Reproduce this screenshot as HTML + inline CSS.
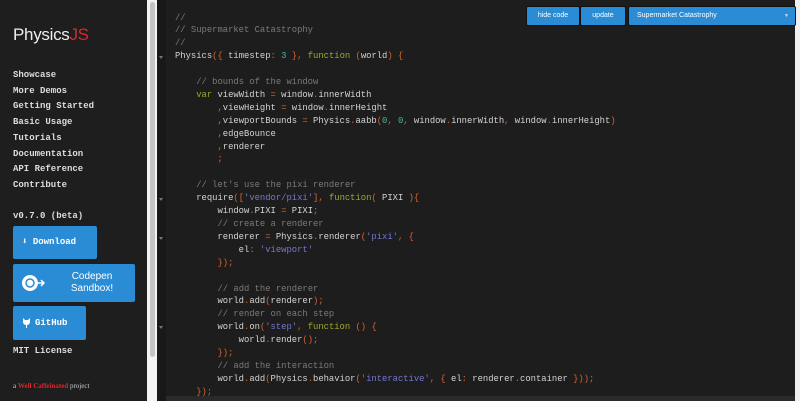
<!DOCTYPE html>
<html><head><meta charset="utf-8"><style>
*{margin:0;padding:0;box-sizing:border-box}
body{width:800px;height:401px;overflow:hidden;background:#1c1c1c;font-family:"Liberation Sans",sans-serif;position:relative}
#side{position:absolute;left:0;top:0;width:147px;height:401px;background:#1e1e1e}
.logo{position:absolute;left:13px;top:25px;font-size:17px;color:#eee;letter-spacing:-0.3px}
.logo span{color:#d9262c}
.nav{position:absolute;left:13px;top:68px;font-family:"Liberation Mono",monospace;font-weight:bold;font-size:9px;color:#ddd;line-height:15.7px}
.ver{position:absolute;left:13px;top:211px;font-family:"Liberation Mono",monospace;font-weight:bold;font-size:9px;color:#ddd}
.btn{position:absolute;background:#2b8cd6;border-radius:2px;color:#fff;font-size:10px}
.mit{position:absolute;left:13px;top:346px;font-family:"Liberation Mono",monospace;font-weight:bold;font-size:9px;color:#ddd}
.cred{position:absolute;left:13px;top:382px;font-family:"Liberation Serif",serif;font-size:7px;color:#ccc}
.cred b{color:#d9262c}
#sb{position:absolute;left:147px;top:0;width:10px;height:401px;background:#f3f3f3}
#sb div{position:absolute;left:3px;top:2px;width:5px;height:355px;background:#c4c4c4;border-radius:3px}
#gut{position:absolute;left:157px;top:0;width:9px;height:401px;background:#181818}
#code{position:absolute;left:166px;top:0;width:629px;height:401px;background:#1d1d1d}
pre{position:absolute;left:175px;top:11.5px;font-family:"Liberation Mono",monospace;font-size:8.85px;line-height:12.9px;color:#d4d4d4}
.c{color:#7a7a7a}.k{color:#a0a82e}.p{color:#d6662e}.s{color:#7377d0}.n{color:#45b5a5}
#rs{position:absolute;left:795px;top:0;width:5px;height:401px;background:#f0f0f0}
#hs{position:absolute;left:166px;top:396px;width:629px;height:5px;background:#2a2a2a}
.tb{position:absolute;top:6px;height:20px;background:#2b8cd6;border:1px solid #111;border-radius:2px;color:#fff;font-size:7px;line-height:18px;text-align:center}
.arr{position:absolute;left:159px;width:0;height:0;border-left:2.5px solid transparent;border-right:2.5px solid transparent;border-top:3px solid #777}
</style></head><body>
<div id="side">
<div class="logo">Physics<span>JS</span></div>
<div class="nav">Showcase<br>More Demos<br>Getting Started<br>Basic Usage<br>Tutorials<br>Documentation<br>API Reference<br>Contribute</div>
<div class="ver">v0.7.0 (beta)</div>
<div class="btn" style="left:13px;top:226px;width:84px;height:33px;font-family:'Liberation Mono',monospace;font-weight:bold;font-size:9px;line-height:33px;padding-left:9px">⬇ Download</div>
<div class="btn" style="left:13px;top:264px;width:122px;height:38px">
<svg style="position:absolute;left:8px;top:10px" width="24" height="18" viewBox="0 0 24 18"><circle cx="9" cy="9" r="8" fill="#fff"/><circle cx="9" cy="9" r="4" fill="none" stroke="#2b8cd6" stroke-width="1.5"/><path d="M17 9h5M20 6l3 3-3 3" stroke="#fff" stroke-width="1.5" fill="none"/></svg>
<div style="position:absolute;left:54px;top:7px;text-align:center;font-size:10px;line-height:12px;width:50px">Codepen<br>Sandbox!</div></div>
<div class="btn" style="left:13px;top:306px;width:73px;height:34px;font-family:'Liberation Mono',monospace;font-weight:bold;font-size:9px;line-height:34px;padding-left:22px">GitHub
<svg style="position:absolute;left:9px;top:12px" width="9" height="10" viewBox="0 0 9 10"><path d="M1 0l2 2h3l2-2v4a3 3 0 0 1-3 3v3h-1v-3a3 3 0 0 1-3-3z" fill="#fff"/></svg></div>
<div class="mit">MIT License</div>
<div class="cred">a <b>Well Caffeinated</b> project</div>
</div>
<div id="sb"><div></div></div>
<div id="gut"></div>
<div id="code"></div>
<div class="arr" style="top:56px"></div><div class="arr" style="top:198px"></div><div class="arr" style="top:237px"></div><div class="arr" style="top:326px"></div>
<pre><span class="c">//
// Supermarket Catastrophy
//</span>
Physics<span class="p">({</span> timestep<span class="p">:</span> <span class="n">3</span> <span class="p">},</span> <span class="k">function</span> <span class="p">(</span>world<span class="p">)</span> <span class="p">{</span>

    <span class="c">// bounds of the window</span>
    <span class="k">var</span> viewWidth <span class="p">=</span> window<span class="p">.</span>innerWidth
        <span class="p">,</span>viewHeight <span class="p">=</span> window<span class="p">.</span>innerHeight
        <span class="p">,</span>viewportBounds <span class="p">=</span> Physics<span class="p">.</span>aabb<span class="p">(</span><span class="n">0</span><span class="p">,</span> <span class="n">0</span><span class="p">,</span> window<span class="p">.</span>innerWidth<span class="p">,</span> window<span class="p">.</span>innerHeight<span class="p">)</span>
        <span class="p">,</span>edgeBounce
        <span class="p">,</span>renderer
        <span class="p">;</span>

    <span class="c">// let's use the pixi renderer</span>
    require<span class="p">([</span><span class="s">'vendor/pixi'</span><span class="p">],</span> <span class="k">function</span><span class="p">(</span> PIXI <span class="p">){</span>
        window<span class="p">.</span>PIXI <span class="p">=</span> PIXI<span class="p">;</span>
        <span class="c">// create a renderer</span>
        renderer <span class="p">=</span> Physics<span class="p">.</span>renderer<span class="p">(</span><span class="s">'pixi'</span><span class="p">,</span> <span class="p">{</span>
            el<span class="p">:</span> <span class="s">'viewport'</span>
        <span class="p">});</span>

        <span class="c">// add the renderer</span>
        world<span class="p">.</span>add<span class="p">(</span>renderer<span class="p">);</span>
        <span class="c">// render on each step</span>
        world<span class="p">.</span>on<span class="p">(</span><span class="s">'step'</span><span class="p">,</span> <span class="k">function</span> <span class="p">()</span> <span class="p">{</span>
            world<span class="p">.</span>render<span class="p">();</span>
        <span class="p">});</span>
        <span class="c">// add the interaction</span>
        world<span class="p">.</span>add<span class="p">(</span>Physics<span class="p">.</span>behavior<span class="p">(</span><span class="s">'interactive'</span><span class="p">,</span> <span class="p">{</span> el<span class="p">:</span> renderer<span class="p">.</span>container <span class="p">}));</span>
    <span class="p">});</span></pre>
<div id="hs"></div>
<div id="rs"></div>
<div class="tb" style="left:526px;width:54px">hide code</div>
<div class="tb" style="left:580px;width:46px">update</div>
<div class="tb" style="left:628px;width:168px;text-align:left;padding-left:8px">Supermarket Catastrophy<span style="position:absolute;right:6px;top:0;font-size:5px;color:#cde">▼</span></div>
</body></html>
